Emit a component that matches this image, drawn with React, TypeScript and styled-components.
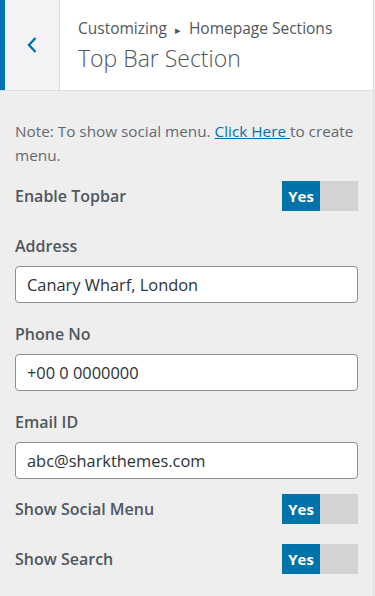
import React from "react";
import styled, { createGlobalStyle } from "styled-components";

const GlobalStyle = createGlobalStyle`
  body {
    margin: 0;
    background: #eeeeee;
    font-family: "Open Sans", "Noto Sans", sans-serif;
  }
`;

const fields = [
  { label: "Address", value: "Canary Wharf, London" },
  { label: "Phone No", value: "+00 0 0000000" },
  { label: "Email ID", value: "abc@sharkthemes.com" },
];

const App = () => {
  return (
    <>
      <GlobalStyle />
      <Panel>
        <Header>
          <BackButton aria-label="Back">
            <svg width="12" height="18" viewBox="0 0 12 18">
              <path
                d="M9.5 2 L3 9 L9.5 16"
                fill="none"
                stroke="#0073aa"
                strokeWidth="2.4"
              />
            </svg>
          </BackButton>
          <HeaderText>
            <Crumb>
              Customizing <Arrow>▸</Arrow> Homepage Sections
            </Crumb>
            <Title>Top Bar Section</Title>
          </HeaderText>
        </Header>
        <Content>
          <Note>
            Note: To show social menu. <Link href="#">Click Here </Link>to
            create menu.
          </Note>
          <ToggleRow>
            <Label>Enable Topbar</Label>
            <Toggle />
          </ToggleRow>
          <FieldGroup>
            {fields.map((f) => (
              <Field key={f.label}>
                <Label>{f.label}</Label>
                <Input defaultValue={f.value} />
              </Field>
            ))}
          </FieldGroup>
          <ToggleRow>
            <Label>Show Social Menu</Label>
            <Toggle />
          </ToggleRow>
          <ToggleRow>
            <Label>Show Search</Label>
            <Toggle />
          </ToggleRow>
        </Content>
      </Panel>
    </>
  );
};

const Toggle = () => (
  <ToggleBox>
    <ToggleOn>Yes</ToggleOn>
    <ToggleOff />
  </ToggleBox>
);

const Panel = styled.div`
  width: 373px;
  min-height: 596px;
  border-right: 1px solid #dcdcde;
  background: #eeeeee;
`;

const Header = styled.div`
  display: flex;
  height: 90px;
  background: #ffffff;
  border-bottom: 1px solid #dddddd;
`;

const BackButton = styled.div`
  width: 54px;
  border-left: 5px solid #0073aa;
  border-right: 1px solid #dddddd;
  background: #f3f3f5;
  display: flex;
  align-items: center;
  justify-content: center;
`;

const HeaderText = styled.div`
  display: flex;
  flex-direction: column;
  justify-content: center;
  padding-left: 18px;
  color: #50575e;
`;

const Crumb = styled.div`
  font-size: 15.5px;
  line-height: 24px;
`;

const Arrow = styled.span`
  font-size: 11px;
  margin: 0 4px;
`;

const Title = styled.div`
  font-size: 23px;
  font-weight: 300;
  line-height: 33px;
`;

const Content = styled.div`
  padding: 28px 15px 0 15px;
  display: flex;
  flex-direction: column;
`;

const Note = styled.p`
  margin: 0 0 4px 0;
  font-size: 15.3px;
  line-height: 24px;
  color: #646970;
`;

const Link = styled.a`
  color: #0073aa;
  text-decoration: underline;
`;

const Label = styled.span`
  font-size: 16px;
  line-height: 22px;
  font-weight: 600;
  color: #50575e;
`;

const ToggleRow = styled.div`
  display: flex;
  justify-content: space-between;
  align-items: center;
  height: 50px;
`;

const ToggleBox = styled.div`
  display: flex;
  width: 76px;
  height: 30px;
`;

const ToggleOn = styled.div`
  width: 38px;
  background: #0073aa;
  color: #ffffff;
  font-size: 15px;
  font-weight: 700;
  display: flex;
  align-items: center;
  justify-content: center;
`;

const ToggleOff = styled.div`
  flex: 1;
  background: #d3d3d3;
`;

const FieldGroup = styled.div`
  display: flex;
  flex-direction: column;
  gap: 20px;
  padding: 14px 0 5px 0;
`;

const Field = styled.div`
  display: flex;
  flex-direction: column;
  gap: 9px;
`;

const Input = styled.input`
  box-sizing: border-box;
  width: 100%;
  height: 37px;
  padding: 0 11px;
  border: 1px solid #8c8f94;
  border-radius: 4px;
  background: #ffffff;
  font-family: inherit;
  font-size: 16.4px;
  color: #2c3338;
`;

export default App;
